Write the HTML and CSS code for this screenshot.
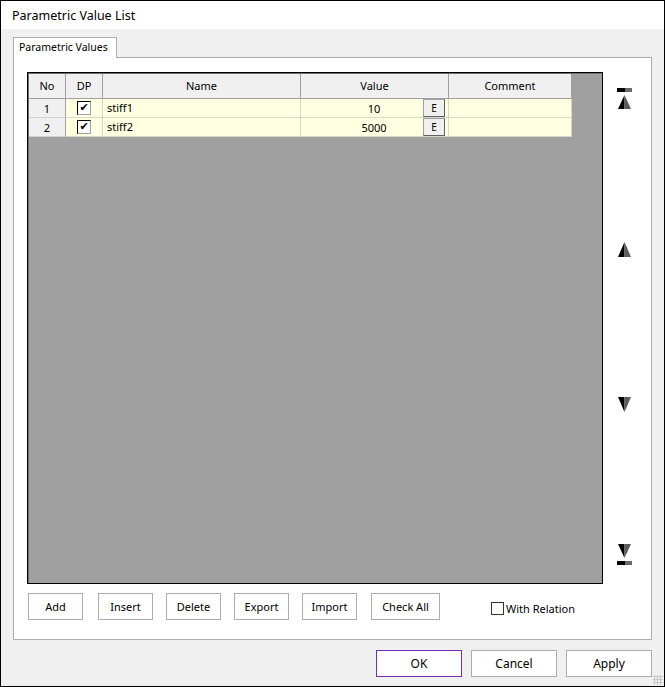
FILE: index.html
```html
<!DOCTYPE html>
<html lang="en">
<head>
    <meta charset="UTF-8">
    <title>Parametric Value List</title>
    <link rel="stylesheet" href="styles.css">
</head>
<body>

    <div class="window">
        <!-- Title -->
        <div class="titlebar">Parametric Value List</div>

        <div class="client">
            <!-- Tabs -->
            <div class="tabs">
                <div class="tab active">Parametric Values</div>
            </div>

            <div class="panel">
                <div class="grid-area">
                    <div class="grid">
                        <div class="row head">
                            <div class="cell">No</div>
                            <div class="cell">DP</div>
                            <div class="cell">Name</div>
                            <div class="cell">Value</div>
                            <div class="cell">Comment</div>
                        </div>
                        <div class="row">
                            <div class="cell num">1</div>
                            <div class="cell dp"><span class="check">&#10004;</span></div>
                            <div class="cell name">stiff1</div>
                            <div class="cell value"><span class="val">10</span><span class="ebtn">E</span></div>
                            <div class="cell"></div>
                        </div>
                        <div class="row">
                            <div class="cell num">2</div>
                            <div class="cell dp"><span class="check">&#10004;</span></div>
                            <div class="cell name">stiff2</div>
                            <div class="cell value"><span class="val">5000</span><span class="ebtn">E</span></div>
                            <div class="cell"></div>
                        </div>
                    </div>

                    <!-- Move buttons -->
                    <div class="movers">
                        <svg class="first" width="15" height="21" viewBox="0 0 15 21">
                            <rect x="0" y="0" width="8" height="4" fill="#000"/>
                            <rect x="8" y="0" width="7" height="4" fill="#6a6a6a"/>
                            <polygon points="7.5,7 1,21 7.5,21" fill="#000"/>
                            <polygon points="7.5,7 14,21 7.5,21" fill="#5a5a5a"/>
                        </svg>
                        <svg class="up" width="15" height="15" viewBox="0 0 15 15">
                            <polygon points="7.5,0 1,15 7.5,15" fill="#000"/>
                            <polygon points="7.5,0 14,15 7.5,15" fill="#5a5a5a"/>
                        </svg>
                        <svg class="down" width="15" height="15" viewBox="0 0 15 15">
                            <polygon points="1,0 7.5,0 7.5,15" fill="#000"/>
                            <polygon points="7.5,0 14,0 7.5,15" fill="#5a5a5a"/>
                        </svg>
                        <svg class="last" width="15" height="21" viewBox="0 0 15 21">
                            <polygon points="1,0 7.5,0 7.5,14" fill="#000"/>
                            <polygon points="7.5,0 14,0 7.5,14" fill="#5a5a5a"/>
                            <rect x="0" y="17" width="8" height="4" fill="#000"/>
                            <rect x="8" y="17" width="7" height="4" fill="#6a6a6a"/>
                        </svg>
                    </div>
                </div>

                <div class="actions">
                    <button class="btn add">Add</button>
                    <button class="btn">Insert</button>
                    <button class="btn">Delete</button>
                    <button class="btn">Export</button>
                    <button class="btn import">Import</button>
                    <button class="btn wide">Check All</button>
                    <label class="relation"><span class="box"></span>With Relation</label>
                </div>
            </div>

            <!-- Dialog buttons -->
            <div class="footer">
                <button class="btn dlg default">OK</button>
                <button class="btn dlg">Cancel</button>
                <button class="btn dlg">Apply</button>
            </div>
            <div class="grip"></div>
        </div>
    </div>

</body>
</html>
```

FILE: styles.css
```css
body {
    margin: 0;
    padding: 0;
    font-family: "Noto Sans", "Open Sans", sans-serif;
    font-size: 12px;
    color: #000;
    background: #fff;
}
.window {
    width: 665px;
    height: 687px;
    box-sizing: border-box;
    border: 1px solid #000;
    display: flex;
    flex-direction: column;
    background: #f0f0f0;
}
.titlebar {
    height: 28px;
    background: #fff;
    padding-left: 11px;
    line-height: 30px;
    font-size: 12.5px;
}
.client {
    flex: 1;
    position: relative;
    padding: 8px 12px 0 12px;
}
.tabs {
    display: flex;
    height: 20px;
}
.tab {
    background: #fff;
    border: 1px solid #adadad;
    border-bottom: none;
    padding: 0 0 0 5px;
    font-size: 10.5px;
    line-height: 18px;
    white-space: nowrap;
    box-sizing: border-box;
    width: 104px;
    height: 21px;
    position: relative;
    z-index: 1;
    margin-bottom: -1px;
}
.panel {
    background: #fff;
    border: 1px solid #adadad;
    height: 583px;
    box-sizing: border-box;
    padding: 14px 0 0 13px;
}
.grid-area {
    display: flex;
}
.grid {
    width: 576px;
    height: 512px;
    box-sizing: border-box;
    border: 1px solid #000;
    box-shadow: inset 1px 1px 0 #6d6d6d;
    padding: 1px 0 0 1px;
    background: #a0a0a0;
    font-size: 11px;
}
.row {
    display: grid;
    grid-template-columns: 37px 37px 198px 148px 123px;
    height: 19px;
}
.row.head {
    height: 25px;
}
.cell {
    box-sizing: border-box;
    border-right: 1px solid #d8d8c8;
    border-bottom: 1px solid #d8d8c8;
    background: #ffffe1;
    display: flex;
    align-items: center;
    justify-content: center;
}
.head .cell {
    background: #f0f0f0;
    border-right: 1px solid #a0a0a0;
    border-bottom: 1px solid #a0a0a0;
    padding-bottom: 2px;
}
.cell.num {
    background: #f0f0f0;
    border-right-color: #a0a0a0;
    border-bottom-color: #d0d0d0;
}
.cell.name {
    justify-content: flex-start;
    padding-left: 4px;
    align-items: flex-start;
    padding-top: 1px;
}
.cell.value {
    justify-content: flex-end;
}
.val {
    flex: 1;
    text-align: center;
    padding-left: 24px;
}
.ebtn {
    width: 22px;
    height: 18px;
    box-sizing: border-box;
    background: #f0f0f0;
    border: 1px solid #a0a0a0;
    border-right-color: #606060;
    border-bottom-color: #606060;
    display: flex;
    align-items: center;
    justify-content: center;
    font-size: 10px;
    margin-right: 3px;
}
.check {
    width: 14px;
    height: 14px;
    box-sizing: border-box;
    background: #fff;
    border: 1px solid #000;
    border-right-color: #a0a0a0;
    border-bottom-color: #a0a0a0;
    font-size: 11px;
    line-height: 12px;
    text-align: center;
    font-family: "DejaVu Sans", sans-serif;
}
.movers {
    width: 15px;
    margin-left: 14px;
    display: flex;
    flex-direction: column;
    padding-top: 16px;
}
.movers svg {
    display: block;
    flex: none;
}
.movers .up {
    margin-top: 133px;
}
.movers .down {
    margin-top: 140px;
}
.movers .last {
    margin-top: 132px;
}
.actions {
    display: flex;
    align-items: center;
    margin-top: 9px;
    margin-left: 1px;
}
.btn {
    font-family: "Noto Sans", "Open Sans", sans-serif;
    font-size: 11px;
    background: #fff;
    border: 1px solid #adadad;
    height: 27px;
    width: 55px;
    margin-right: 13px;
    padding: 0;
    color: #000;
}
.btn.add {
    margin-right: 15px;
}
.btn.import {
    margin-right: 14px;
}
.btn.wide {
    width: 69px;
}
.relation {
    display: flex;
    align-items: center;
    margin-left: 38px;
    margin-top: 4px;
    font-size: 11px;
}
.box {
    width: 13px;
    height: 13px;
    box-sizing: border-box;
    border: 1px solid #333;
    background: #fff;
    margin-right: 2px;
}
.footer {
    display: flex;
    justify-content: flex-end;
    margin-top: 10px;
    gap: 9px;
}
.btn.dlg {
    width: 86px;
    margin: 0;
    font-size: 12px;
}
.btn.dlg.default {
    border-color: #7a2cb0;
}
.grip {
    position: absolute;
    right: 1px;
    bottom: 1px;
    width: 10px;
    height: 10px;
    background-image: radial-gradient(#c8c8c8 1px, transparent 1.2px);
    background-size: 3px 3px;
}
```
